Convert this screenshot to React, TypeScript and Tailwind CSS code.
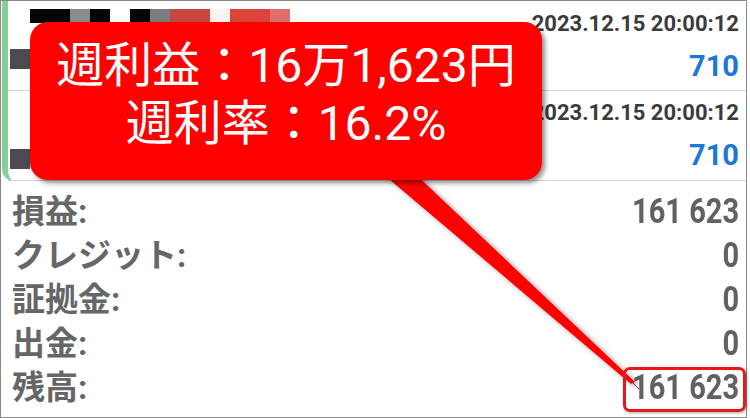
import React from "react";

const mosaic = [
  { w: 40, c: "bg-[#050505]" },
  { w: 20, c: "bg-[#8c8c8c]" },
  { w: 20, c: "bg-[#050505]" },
  { w: 20, c: "bg-white" },
  { w: 20, c: "bg-[#050505]" },
  { w: 20, c: "bg-[#7d7d7d]" },
  { w: 40, c: "bg-[#c8473f]" },
  { w: 20, c: "bg-[#fdf4f1]" },
  { w: 40, c: "bg-[#dc433a]" },
  { w: 20, c: "bg-[#df6f6d]" },
];

const summary = [
  { label: "損益", value: "161 623" },
  { label: "クレジット", value: "0" },
  { label: "証拠金", value: "0" },
  { label: "出金", value: "0" },
  { label: "残高", value: "161 623" },
];

function DealRow({ top, children }: { top: boolean; children?: React.ReactNode }) {
  return (
    <div className="flex h-[90px] justify-between border-b border-[#d4d4d4]">
      <div className="pl-[2px]">{children}</div>
      <div className={`flex flex-col items-end pr-[7px] ${top ? "pt-[10px]" : "pt-[9px]"}`}>
        <div className="font-['Roboto',sans-serif] text-[22px] font-bold leading-[26px] text-[#3b3b3b]">
          2023.12.15 20:00:12
        </div>
        <div className="mt-[13px] font-['Roboto',sans-serif] text-[29px] font-bold leading-[32px] text-[#1d77d6]">
          710
        </div>
      </div>
    </div>
  );
}

export default function App() {
  return (
    <div className="relative h-[418px] w-[750px] bg-white">
      <div className="h-[418px] w-[747px] border border-[#8a8a8a] bg-white">
        <div className="ml-[1px] rounded-bl-[12px] border-l-[6px] border-[#86cf98]">
          <DealRow top>
            <div className="flex pt-[8px] pl-[20px]">
              {mosaic.map((m, i) => (
                <div key={i} className={`h-[14px] ${m.c}`} style={{ width: m.w }} />
              ))}
            </div>
            <div className="mt-[26px] h-[20px] w-[20px] bg-[#4a4a50]" />
          </DealRow>
          <DealRow top={false}>
            <div className="mt-[58px] h-[20px] w-[20px] bg-[#4a4a50]" />
          </DealRow>
        </div>

        <div className="flex flex-col pt-[9px]">
          {summary.map((s, i) => (
            <div key={i} className="flex h-[44px] items-center justify-between pl-[11px] pr-[7px]">
              <span className="font-['Roboto','Noto_Sans_CJK_JP',sans-serif] text-[33px] font-bold leading-[44px] text-[#666666]">
                {s.label}:
              </span>
              <span className="inline-block origin-right scale-x-[0.83] font-['Roboto',sans-serif] text-[35px] font-bold leading-[44px] text-[#616161]">
                {s.value}
              </span>
            </div>
          ))}
        </div>
      </div>

      {/* callout tail */}
      <svg className="absolute left-0 top-0" width="750" height="418" viewBox="0 0 750 418">
        <defs>
          <filter id="sh" x="-10%" y="-10%" width="130%" height="130%">
            <feDropShadow dx="3" dy="2" stdDeviation="2.5" floodColor="#000" floodOpacity="0.4" />
          </filter>
        </defs>
        <polygon points="376,168 409,168 635,382 631,384" fill="#ff0000" filter="url(#sh)" />
        <line x1="628" y1="378" x2="639" y2="389" stroke="#8a2a2a" strokeWidth="1" />
      </svg>

      {/* callout box */}
      <div className="absolute left-[30px] top-[22px] flex h-[158px] w-[512px] flex-col items-center rounded-[18px] bg-[#ff0000] pt-[16px] shadow-[3px_3px_5px_rgba(0,0,0,0.45)]">
        <div className="font-['Roboto','Noto_Sans_CJK_JP',sans-serif] text-[48px] font-normal leading-[56px] text-white">
          週利益：16万1,623円
        </div>
        <div className="mt-[2px] font-['Roboto','Noto_Sans_CJK_JP',sans-serif] text-[48px] font-normal leading-[56px] text-white">
          週利率：16.2%
        </div>
      </div>

      {/* highlight */}
      <div className="absolute left-[623px] top-[367px] h-[45px] w-[123px] rounded-[7px] border-[3px] border-[#e5191c] shadow-[1px_1px_3px_rgba(0,0,0,0.35)]" />
    </div>
  );
}
